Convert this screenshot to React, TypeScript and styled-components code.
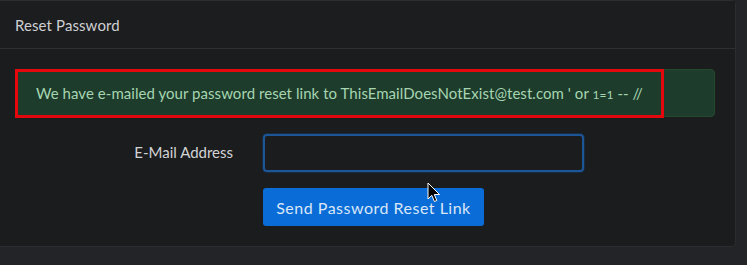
import React from "react";
import styled, { createGlobalStyle } from "styled-components";

const Global = createGlobalStyle`
  html, body { margin: 0; padding: 0; background: #232427; }
  body { font-family: Lato, "Open Sans", sans-serif; color: #d6d6d6; overflow: hidden; }
  * { box-sizing: border-box; }
`;

const Page = styled.div`
  width: 747px;
  height: 265px;
  position: relative;
  overflow: hidden;
`;

const Card = styled.div`
  margin-left: -6px;
  width: 742px;
  background: #1b1c1e;
  border: 1px solid #2c2d30;
  border-radius: 4px;
`;

const CardHeader = styled.div`
  height: 48px;
  padding: 0 20px;
  display: flex;
  align-items: center;
  font-size: 15px;
  letter-spacing: 0.1px;
  color: #cfd0d2;
  background: #1c1d1f;
  border-bottom: 1px solid #2e2f32;
`;

const CardBody = styled.div`
  padding: 20px;
  display: flex;
  flex-direction: column;
`;

const Alert = styled.div`
  height: 48px;
  display: flex;
  align-items: center;
  padding: 0 20px;
  background: #1d3c2b;
  border: 1px solid #24492f;
  border-radius: 4px;
  color: #a6d5b1;
  font-size: 15px;
  letter-spacing: 0.05px;
  margin-bottom: 17px;
`;

const Small = styled.span`
  font-size: 12px;
`;

const FormRow = styled.div<{ $gap?: number }>`
  display: grid;
  grid-template-columns: 228px 321px;
  column-gap: 20px;
  align-items: center;
  margin-bottom: ${(p) => p.$gap ?? 0}px;
`;

const Label = styled.label`
  text-align: right;
  padding-right: 10px;
  padding-bottom: 3px;
  font-size: 15px;
  color: #d2d3d5;
`;

const Input = styled.input`
  height: 38px;
  width: 321px;
  background: #1b1c1e;
  border: 2px solid #1c5696;
  border-radius: 4px;
  box-shadow: 0 0 0 1px rgba(20, 80, 150, 0.3);
  outline: none;
`;

const Button = styled.button`
  grid-column: 2;
  justify-self: start;
  height: 38px;
  width: 221px;
  background: #0a6cd6;
  border: none;
  border-radius: 3px;
  color: #d9e7f8;
  font-family: inherit;
  font-size: 16px;
  letter-spacing: 0.5px;
  padding: 0;
`;

const Highlight = styled.div`
  position: absolute;
  left: 15px;
  top: 69px;
  width: 649px;
  height: 49px;
  border: 3px solid #e4080c;
  pointer-events: none;
`;

const Cursor = styled.svg`
  position: absolute;
  left: 427px;
  top: 182px;
`;

export default function App() {
  return (
    <Page>
      <Global />
      <Card>
        <CardHeader>Reset Password</CardHeader>
        <CardBody>
          <Alert>
            <span>
              We have e-mailed your password reset link to ThisEmailDoesNotExist@test.com ' or <Small>1=1</Small> -- //
            </span>
          </Alert>
          <FormRow $gap={16}>
            <Label>E-Mail Address</Label>
            <Input type="email" />
          </FormRow>
          <FormRow>
            <Button>Send Password Reset Link</Button>
          </FormRow>
        </CardBody>
      </Card>
      <Highlight />
      <Cursor width="14" height="22" viewBox="0 0 14 22">
        <path d="M1 1 L1 17 L4.8 13.3 L7.4 19.5 L9.8 18.5 L7.3 12.5 L12.5 12.5 Z" fill="#000" stroke="#fff" strokeWidth="1" strokeLinejoin="round" />
      </Cursor>
    </Page>
  );
}
